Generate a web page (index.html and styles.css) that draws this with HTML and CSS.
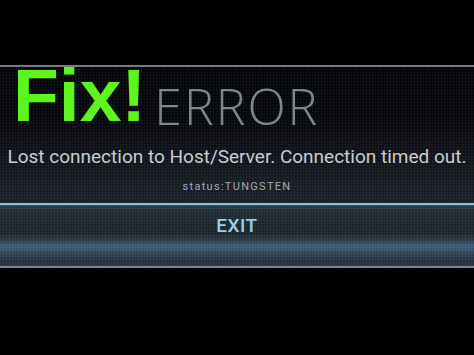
FILE: index.html
```html
<!DOCTYPE html>
<html>
<head>
<meta charset="utf-8">
<link rel="stylesheet" href="styles.css">
</head>
<body>
<div class="screen">
  <div class="top"></div>
  <div class="panel">
    <div class="header">
      <span class="fix">Fix!</span>
      <span class="error">ERROR</span>
    </div>
    <div class="message">Lost connection to Host/Server. Connection timed out.</div>
    <div class="status">status:TUNGSTEN</div>
    <div class="button">
      <span class="exit">EXIT</span>
    </div>
  </div>
</div>
</body>
</html>
```
FILE: styles.css
```css
html, body {
  margin: 0;
  padding: 0;
  background: #000;
}
.screen {
  width: 474px;
  height: 355px;
  background: #000;
  overflow: hidden;
}
.top {
  height: 65px;
}
.panel {
  border-top: 2px solid #777a7e;
  background:
    repeating-linear-gradient(90deg, rgba(255,255,255,0.03) 0 1px, transparent 1px 3px),
    repeating-linear-gradient(0deg, rgba(255,255,255,0.03) 0 1px, transparent 1px 3px),
    linear-gradient(180deg, #040507 0px, #06070a 50px, #0d1016 78px, #151a21 110px, #1a2028 136px);
}
.header {
  display: flex;
  align-items: flex-start;
  height: 78px;
  padding-left: 13px;
}
.fix {
  font-family: "Liberation Sans", Arial, sans-serif;
  font-weight: bold;
  font-size: 75px;
  line-height: 56px;
  color: #5cf51c;
}
.error {
  font-family: "Open Sans", sans-serif;
  font-weight: 300;
  font-size: 50px;
  line-height: 50px;
  color: #7b8891;
  margin-left: 8px;
  margin-top: 14px;
  letter-spacing: 2px;
}
.message {
  font-family: Roboto, sans-serif;
  font-size: 19px;
  color: #c9cdd1;
  text-align: center;
  line-height: 24px;
  white-space: nowrap;
}
.status {
  font-family: Roboto, sans-serif;
  font-size: 11px;
  color: #a4acb4;
  text-align: center;
  letter-spacing: 1.3px;
  line-height: 14px;
  margin-top: 11px;
}
.button {
  margin-top: 9px;
  height: 61px;
  border-top: 2px solid #8cc6de;
  border-bottom: 2px solid #6d8798;
  display: flex;
  justify-content: center;
  align-items: flex-start;
  background:
    repeating-linear-gradient(90deg, rgba(255,255,255,0.04) 0 1px, transparent 1px 3px),
    repeating-linear-gradient(0deg, rgba(255,255,255,0.04) 0 1px, transparent 1px 3px),
    linear-gradient(180deg, #2b4050 0px, #1f2b33 6px, #1b2328 28px, #2a3a48 35px, #3f5b74 41px, #2f4254 49px, #232d36 56px, #2b3743 61px);
}
.exit {
  font-family: Roboto, sans-serif;
  font-weight: 500;
  font-size: 19px;
  color: #94d2ea;
  line-height: 20px;
  margin-top: 11px;
  letter-spacing: 0.5px;
}
```
